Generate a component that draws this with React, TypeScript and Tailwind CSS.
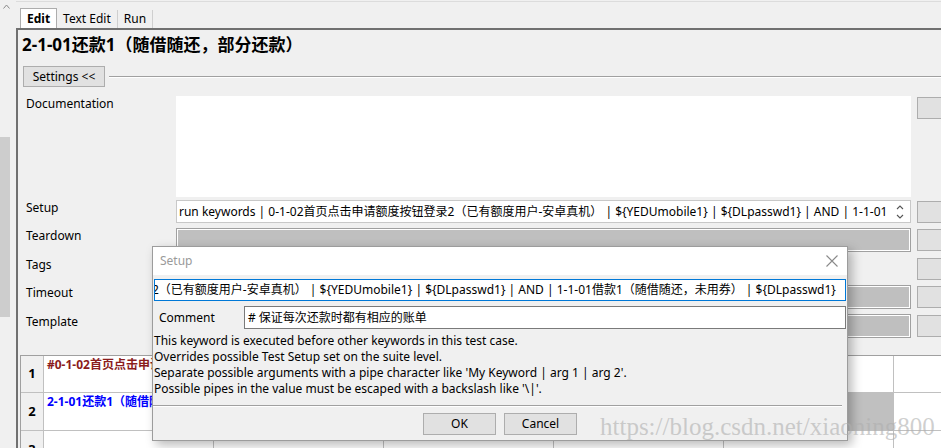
import React from 'react'

const ui = '"Noto Sans", "Noto Sans CJK SC", sans-serif'

function SideButton({ className = '' }: { className?: string }) {
  return <div className={`w-[30px] h-[22px] shrink-0 bg-[#e1e1e1] border border-[#adadad] ${className}`} />
}

function DisabledField() {
  return (
    <div className="w-[735px] h-[24px] shrink-0 bg-[#bfbfbf] border border-[#a0a0a0] shadow-[inset_0_0_0_1px_#ffffff]" />
  )
}

function FormRow({ label, children, className = '' }: { label: string; children?: React.ReactNode; className?: string }) {
  return (
    <div className={`flex items-start h-[24px] ${className}`}>
      <div className="w-[158px] shrink-0 pl-[8px] text-[12px] leading-[16px] text-black">{label}</div>
      <div className="w-[735px] shrink-0">{children}</div>
      <SideButton className="ml-[6px] mt-[1px]" />
    </div>
  )
}

function GridRow({ n, text, color, height, grayCol }: { n: string; text?: string; color?: string; height: string; grayCol?: boolean }) {
  const cols = [0, 1, 2, 3, 4]
  return (
    <div className={`flex shrink-0 ${height} border-b border-[#c0c0c0]`}>
      <div className="w-[23px] shrink-0 flex items-center justify-center bg-[#f0f0f0] border-r border-[#c0c0c0] text-[13px] font-bold text-black">
        {n}
      </div>
      {cols.map((c) => (
        <div
          key={c}
          className={`w-[170px] shrink-0 border-r border-[#c0c0c0] overflow-hidden ${grayCol && c === 4 ? 'bg-[#c0c0c0]' : 'bg-white'}`}
        >
          {c === 0 && text ? (
            <div className={`pl-[3px] pt-[1px] whitespace-nowrap text-[12px] leading-[16px] font-bold ${color}`}>{text}</div>
          ) : null}
        </div>
      ))}
      <div className="flex-1 bg-white" />
    </div>
  )
}

function SetupDialog() {
  return (
    <div className="absolute left-[152px] top-[246px] w-[696px] h-[195px] flex flex-col border border-[#9c9c9c] bg-[#f0f0f0] shadow-[4px_4px_10px_rgba(0,0,0,0.28)]">
      {/* Title bar */}
      <div className="h-[28px] shrink-0 bg-white flex items-center justify-between pl-[7px] pr-[8px]">
        <span className="text-[12px] text-[#9a9a9a]">Setup</span>
        <svg width="14" height="14" viewBox="0 0 14 14" stroke="#8a8a8a" strokeWidth="1.1" fill="none">
          <path d="M1.5 1.5l11 11M12.5 1.5l-11 11" />
        </svg>
      </div>

      {/* Value field */}
      <div className="mx-[1px] mt-[4px] h-[22px] bg-white border border-[#0078d7] flex items-center overflow-hidden">
        <span className="ml-[-3px] whitespace-nowrap text-[12px] text-black">
          2（已有额度用户-安卓真机） | {'${YEDUmobile1}'} | {'${DLpasswd1}'} | AND | 1-1-01借款1（随借随还，未用券） | {'${DLpasswd1}'}
        </span>
      </div>

      {/* Comment */}
      <div className="flex items-center mt-[5px] mx-[1px]">
        <div className="w-[90px] shrink-0 pl-[5px] text-[12px] text-black">Comment</div>
        <div className="flex-1 h-[23px] bg-white border border-[#7a7a7a] flex items-center px-[3px] text-[12px] text-black whitespace-nowrap">
          # 保证每次还款时都有相应的账单
        </div>
      </div>

      {/* Help */}
      <div className="mt-[4px] pl-[1px] text-[12px] leading-[16px] text-black">
        <div>This keyword is executed before other keywords in this test case.</div>
        <div>Overrides possible Test Setup set on the suite level.</div>
        <div>Separate possible arguments with a pipe character like 'My Keyword | arg 1 | arg 2'.</div>
        <div>Possible pipes in the value must be escaped with a backslash like '\|'.</div>
      </div>

      <div className="mt-[8px] mr-[5px] h-[2px] border-t border-[#a0a0a0] border-b border-b-white" />

      <div className="flex mt-[6px] pl-[270px] gap-[8px]">
        <button className="w-[73px] h-[22px] bg-[#e1e1e1] border border-[#adadad] text-[12px] text-black">OK</button>
        <button className="w-[73px] h-[22px] bg-[#e1e1e1] border border-[#adadad] text-[12px] text-black">Cancel</button>
      </div>
    </div>
  )
}

export default function App() {
  return (
    <div className="relative w-[941px] h-[448px] overflow-hidden bg-[#f0f0f0] flex" style={{ fontFamily: ui }}>
      {/* Left gutter (clipped tree pane) */}
      <div className="w-[16px] shrink-0 flex flex-col">
        <div className="h-[14px] pl-[3px] pt-[4px]">
          <svg width="7" height="5" viewBox="0 0 7 5" fill="none" stroke="#8a8a8a" strokeWidth="1">
            <path d="M0.5 4.5L3.5 1L6.5 4.5" />
          </svg>
        </div>
        <div className="mt-[123px] w-[10px] h-[180px] bg-[#cdcdcd]" />
      </div>

      {/* Main editor */}
      <div className="flex-1 flex flex-col min-w-0">
        {/* Tabs */}
        <div className="h-[27px] shrink-0 border-t border-[#dcdcdc] mt-[1px] flex items-end pl-[4px]">
          <div className="h-[20px] px-[6px] flex items-center bg-white border border-b-0 border-[#adadad] text-[12px] font-bold text-black">
            Edit
          </div>
          <div className="h-[18px] px-[6px] flex items-center border-r border-[#cfcfcf] text-[12px] text-black">Text Edit</div>
          <div className="h-[18px] px-[6px] flex items-center border-r border-[#cfcfcf] text-[12px] text-black">Run</div>
        </div>

        {/* Panel */}
        <div className="flex-1 flex flex-col border-t-2 border-l-2 border-[#707070] min-h-0">
          <div className="h-[30px] shrink-0 flex items-center pl-[4px] text-[17px] font-bold text-black whitespace-nowrap">
            2-1-01还款1（随借随还，部分还款）
          </div>

          <div className="flex items-center h-[21px] mt-[6px]">
            <div className="ml-[5px] w-[82px] h-[21px] flex items-center justify-center bg-[#e1e1e1] border border-[#adadad] text-[12px] text-black">
              Settings &lt;&lt;
            </div>
            <div className="flex-1 ml-[4px] h-[2px] border-t border-[#a0a0a0] border-b border-b-white" />
          </div>

          {/* Documentation */}
          <div className="flex items-start mt-[9px]">
            <div className="w-[158px] shrink-0 pl-[8px] text-[12px] leading-[16px] text-black">Documentation</div>
            <div className="w-[735px] h-[101px] shrink-0 bg-white" />
            <SideButton className="ml-[6px] mt-[1px]" />
          </div>

          <FormRow label="Setup" className="mt-[3px]">
            <div className="h-[23px] bg-white border border-[#c8c8c8] flex items-center pl-[2px] pr-[6px] overflow-hidden">
              <span className="flex-1 whitespace-nowrap overflow-hidden text-[12px] text-black">
                run keywords | 0-1-02首页点击申请额度按钮登录2（已有额度用户-安卓真机） | {'${YEDUmobile1}'} | {'${DLpasswd1}'} | AND | 1-1-01
              </span>
              <svg width="8" height="18" viewBox="0 0 8 18" fill="none" stroke="#555" strokeWidth="1.1" className="ml-[8px] shrink-0">
                <path d="M1 6l3-3 3 3M1 12l3 3 3-3" />
              </svg>
            </div>
          </FormRow>
          <FormRow label="Teardown" className="mt-[5px]">
            <DisabledField />
          </FormRow>
          <FormRow label="Tags" className="mt-[5px]" />
          <FormRow label="Timeout" className="mt-[5px]">
            <DisabledField />
          </FormRow>
          <FormRow label="Template" className="mt-[5px]">
            <DisabledField />
          </FormRow>

          {/* Test case grid */}
          <div className="mt-[17px] ml-[2px] flex-1 flex flex-col border-t border-l border-[#a0a0a0] bg-white">
            <GridRow n="1" text="#0-1-02首页点击申请额度" color="text-[#8b1c1c]" height="h-[37px]" />
            <GridRow n="2" text="2-1-01还款1（随借随还" color="text-[#0000ff]" height="h-[38px]" grayCol />
            <GridRow n="3" height="h-[38px]" />
          </div>
        </div>
      </div>

      <SetupDialog />

      {/* Watermark */}
      <div
        className="absolute left-[600px] top-[412px] text-[25px] leading-[30px] text-[rgba(175,175,175,0.6)] whitespace-nowrap pointer-events-none"
        style={{ fontFamily: '"Liberation Serif", serif' }}
      >
        https://blog.csdn.net/xiaoning800
      </div>
    </div>
  )
}
